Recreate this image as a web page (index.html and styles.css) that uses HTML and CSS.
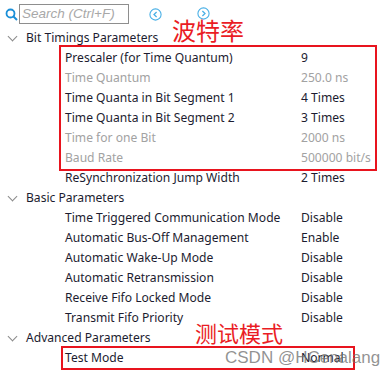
FILE: index.html
```html
<!DOCTYPE html>
<html>
<head>
<meta charset="utf-8">
<link rel="stylesheet" href="styles.css">
</head>
<body>
<div class="page">
  <div class="toolbar">
    <svg class="search-icon" width="13" height="13" viewBox="0 0 13 13"><circle cx="5.5" cy="5.5" r="4" fill="none" stroke="#1a8fd8" stroke-width="1.8"/><line x1="8.5" y1="8.5" x2="12" y2="12" stroke="#1a8fd8" stroke-width="2"/></svg>
    <div class="search-box">Search (Ctrl+F)</div>
    <svg class="nav nav-left" width="13" height="13" viewBox="0 0 13 13"><circle cx="6.5" cy="6.5" r="5.6" fill="none" stroke="#4ab0e6" stroke-width="1.1"/><polyline points="7.6,4 5,6.5 7.6,9" fill="none" stroke="#4ab0e6" stroke-width="1.3"/></svg>
    <svg class="nav nav-right" width="13" height="13" viewBox="0 0 13 13"><circle cx="6.5" cy="6.5" r="5.6" fill="none" stroke="#4ab0e6" stroke-width="1.1"/><polyline points="5.4,4 8,6.5 5.4,9" fill="none" stroke="#4ab0e6" stroke-width="1.3"/></svg>
  </div>
  <div class="tree">
    <div class="group"><span class="chev"></span>Bit Timings Parameters</div>
    <div class="row"><span class="name">Prescaler (for Time Quantum)</span><span class="val">9</span></div>
    <div class="row dim"><span class="name">Time Quantum</span><span class="val">250.0 ns</span></div>
    <div class="row"><span class="name">Time Quanta in Bit Segment 1</span><span class="val">4 Times</span></div>
    <div class="row"><span class="name">Time Quanta in Bit Segment 2</span><span class="val">3 Times</span></div>
    <div class="row dim"><span class="name">Time for one Bit</span><span class="val">2000 ns</span></div>
    <div class="row dim"><span class="name">Baud Rate</span><span class="val">500000 bit/s</span></div>
    <div class="row"><span class="name">ReSynchronization Jump Width</span><span class="val">2 Times</span></div>
    <div class="group"><span class="chev"></span>Basic Parameters</div>
    <div class="row"><span class="name">Time Triggered Communication Mode</span><span class="val">Disable</span></div>
    <div class="row"><span class="name">Automatic Bus-Off Management</span><span class="val">Enable</span></div>
    <div class="row"><span class="name">Automatic Wake-Up Mode</span><span class="val">Disable</span></div>
    <div class="row"><span class="name">Automatic Retransmission</span><span class="val">Disable</span></div>
    <div class="row"><span class="name">Receive Fifo Locked Mode</span><span class="val">Disable</span></div>
    <div class="row"><span class="name">Transmit Fifo Priority</span><span class="val">Disable</span></div>
    <div class="group"><span class="chev"></span>Advanced Parameters</div>
    <div class="row"><span class="name">Test Mode</span><span class="val">Normal</span></div>
  </div>
  <div class="mark box1"></div>
  <div class="mark box2"></div>
  <div class="note note1">波特率</div>
  <div class="note note2">测试模式</div>
  <div class="watermark">CSDN @HCenalang</div>
</div>
</body>
</html>
```
FILE: styles.css
```css
html, body {
  margin: 0;
  padding: 0;
  background: #ffffff;
}
.page {
  position: relative;
  width: 383px;
  height: 377px;
  overflow: hidden;
  font-family: "Noto Sans", "Liberation Sans", sans-serif;
  font-size: 12.1px;
  color: #1c1c30;
}
.toolbar {
  display: flex;
  align-items: center;
  height: 28px;
  padding-left: 5px;
}
.search-icon {
  margin-top: 1px;
}
.search-box {
  box-sizing: border-box;
  width: 110px;
  height: 20px;
  margin-left: 1px;
  border: 1px solid #8e8e8e;
  color: #a8a8a8;
  font-style: italic;
  font-family: "Liberation Sans", sans-serif;
  line-height: 18px;
  padding-left: 2px;
  font-size: 13.5px;
  white-space: nowrap;
  overflow: hidden;
}
.nav-left {
  margin-left: 20px;
}
.nav-right {
  margin-left: 35px;
  margin-top: -2px;
}
.tree {
  display: flex;
  flex-direction: column;
}
.group, .row {
  height: 20px;
  line-height: 20px;
  display: flex;
  align-items: center;
  white-space: nowrap;
}
.group {
  padding-left: 7px;
}
.chev {
  width: 6px;
  height: 6px;
  border-right: 1px solid #8a8a8a;
  border-bottom: 1px solid #8a8a8a;
  transform: rotate(45deg);
  margin: -4px 10px 0 2px;
}
.row {
  padding-left: 65px;
}
.name {
  width: 236px;
}
.dim {
  color: #a2a2a2;
}
.mark {
  position: absolute;
  border: 2px solid #e8141e;
}
.box1 {
  left: 59px;
  top: 45px;
  width: 314px;
  height: 122px;
}
.box2 {
  left: 61px;
  top: 346px;
  width: 290px;
  height: 20px;
}
.note {
  position: absolute;
  color: #ea1c24;
  font-family: "Noto Sans CJK SC", sans-serif;
  line-height: 1;
}
.note1 {
  left: 172px;
  top: 18px;
  font-size: 24px;
}
.note2 {
  left: 195px;
  top: 321px;
  font-size: 22px;
}
.watermark {
  position: absolute;
  left: 225px;
  top: 348px;
  font-family: "Liberation Sans", sans-serif;
  font-size: 17px;
  color: rgba(110, 110, 110, 0.75);
  white-space: nowrap;
}
```
